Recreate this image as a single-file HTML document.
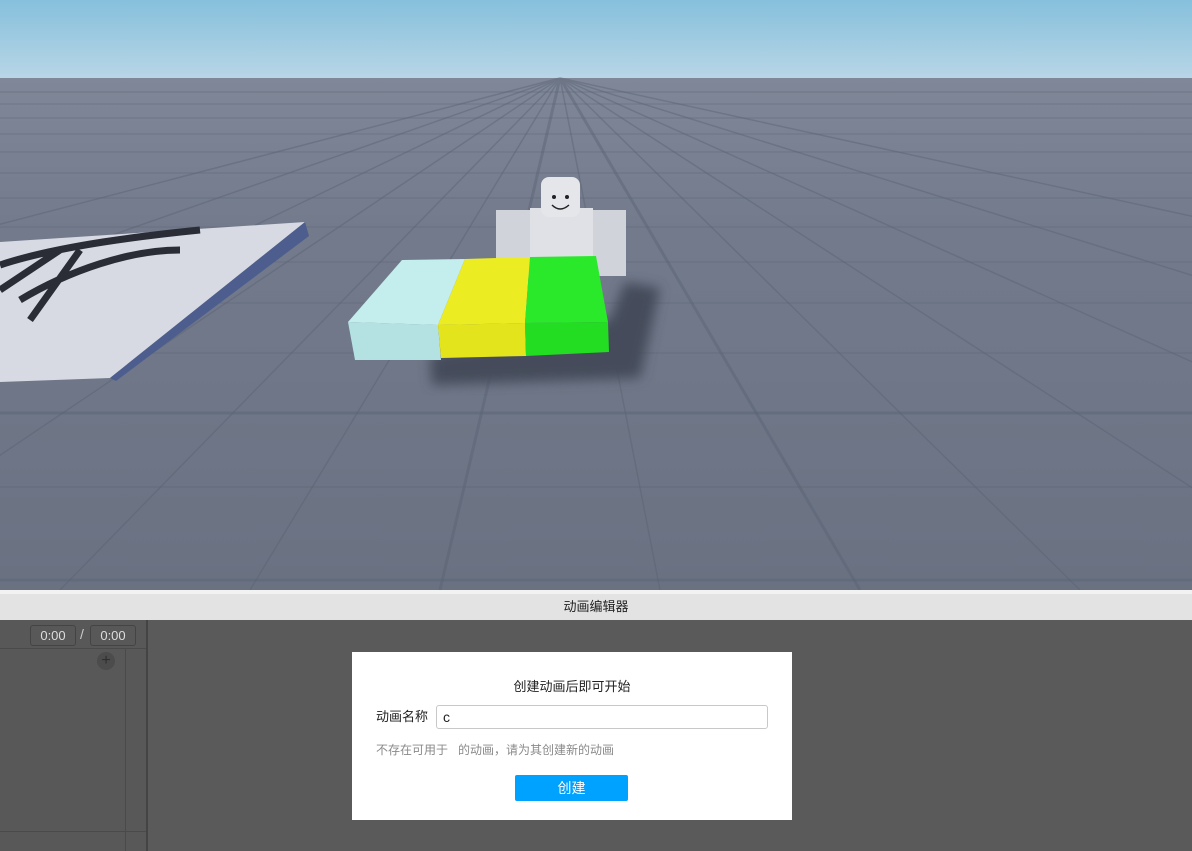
<!DOCTYPE html>
<html><head><meta charset="utf-8"><style>
body{margin:0;width:1192px;height:851px;overflow:hidden;font-family:"Liberation Sans","Noto Sans CJK SC",sans-serif;position:relative;background:#5a5a5a}
.abs{position:absolute}
</style></head><body>
<svg class="abs" style="left:0;top:0" width="1192" height="590" viewBox="0 0 1192 590">
<defs>
<linearGradient id="sky" x1="0" y1="0" x2="0" y2="1"><stop offset="0" stop-color="#86c0dc"/><stop offset="1" stop-color="#b9d6e6"/></linearGradient>
<linearGradient id="gr" x1="0" y1="0" x2="0" y2="1"><stop offset="0" stop-color="#7f8798"/><stop offset="0.3" stop-color="#727a8c"/><stop offset="1" stop-color="#6a7282"/></linearGradient>
<filter id="bl"><feGaussianBlur stdDeviation="6"/></filter>
</defs>
<rect width="1192" height="80" fill="url(#sky)"/>
<rect y="78" width="1192" height="512" fill="url(#gr)"/>
<g stroke="#5a6373" stroke-width="1" opacity="0.45">
<line x1="0" y1="92" x2="1192" y2="92"/><line x1="0" y1="104" x2="1192" y2="104"/><line x1="0" y1="118" x2="1192" y2="118"/><line x1="0" y1="134" x2="1192" y2="134"/><line x1="0" y1="152" x2="1192" y2="152"/><line x1="0" y1="173" x2="1192" y2="173"/><line x1="0" y1="198" x2="1192" y2="198"/><line x1="0" y1="227" x2="1192" y2="227"/><line x1="0" y1="262" x2="1192" y2="262"/><line x1="0" y1="303" x2="1192" y2="303"/><line x1="0" y1="353" x2="1192" y2="353"/><line x1="0" y1="413" x2="1192" y2="413" stroke-width="3"/><line x1="0" y1="487" x2="1192" y2="487"/><line x1="0" y1="580" x2="1192" y2="580" stroke-width="3"/>
</g>
<g stroke="#5a6373" stroke-width="1.5" opacity="0.45">
<line x1="560" y1="78" x2="-1400" y2="590"/><line x1="560" y1="78" x2="-900" y2="590"/><line x1="560" y1="78" x2="-500" y2="590"/><line x1="560" y1="78" x2="-200" y2="590"/><line x1="560" y1="78" x2="60" y2="590"/><line x1="560" y1="78" x2="250" y2="590"/><line x1="560" y1="78" x2="440" y2="590" stroke-width="3"/><line x1="560" y1="78" x2="660" y2="590"/><line x1="560" y1="78" x2="860" y2="590" stroke-width="3"/><line x1="560" y1="78" x2="1080" y2="590"/><line x1="560" y1="78" x2="1350" y2="590"/><line x1="560" y1="78" x2="1700" y2="590"/><line x1="560" y1="78" x2="2200" y2="590"/><line x1="560" y1="78" x2="2900" y2="590"/>
</g>
<polygon points="430,355 610,320 625,282 660,288 640,378 432,385" fill="#444b5a" filter="url(#bl)"/>
<polygon points="0,242 305,222 110,378 0,382" fill="#d8dae3"/>
<polygon points="305,222 309,236 116,381 110,378" fill="#4d5e8e"/>
<path d="M0,265 C60,245 150,235 200,230 M20,300 C70,270 130,250 180,250 M0,290 L60,250 M80,250 L30,320" stroke="#2a2d36" stroke-width="7" fill="none"/>
<rect x="496" y="210" width="130" height="66" fill="#d0d3da"/>
<rect x="530" y="208" width="63" height="68" fill="#dfe1e6"/>
<rect x="541" y="177" width="39" height="40" rx="8" fill="#e4e6ea"/>
<circle cx="554" cy="197" r="2" fill="#222"/><circle cx="567" cy="197" r="2" fill="#222"/>
<path d="M552 205 Q560 213 569 205" stroke="#222" stroke-width="1.5" fill="none"/>
<polygon points="348,322 402,260 465,259 438,325" fill="#c4eded"/>
<polygon points="348,322 438,325 441,360 355,360" fill="#b4e2e3"/>
<polygon points="438,325 465,259 530,257 525,323" fill="#ecec22"/>
<polygon points="438,325 525,323 526,356 441,358" fill="#e4e41c"/>
<polygon points="525,323 530,257 596,256 608,322" fill="#2ae82a"/>
<polygon points="525,323 608,322 609,352 526,356" fill="#22dd22"/>
</svg>
<div class="abs" style="left:0;top:590px;width:1192px;height:30px;background:#e3e3e3;border-top:4px solid #f2f2f2;box-sizing:border-box;font-size:13px;color:#222;text-align:center;line-height:26px;">动画编辑器</div>
<div class="abs" style="left:0;top:620px;width:146px;height:231px;background:#585858;border-right:2px solid #444"></div>
<div class="abs" style="left:0;top:648px;width:146px;height:1px;background:#4a4a4a"></div>
<div class="abs" style="left:125px;top:649px;width:1px;height:202px;background:#4a4a4a"></div>
<div class="abs" style="left:0;top:831px;width:146px;height:1px;background:#4a4a4a"></div>
<div class="abs" style="left:30px;top:625px;width:44px;height:19px;border:1px solid #444;border-radius:3px;color:#ddd;font-size:13px;text-align:center;line-height:19px">0:00</div>
<div class="abs" style="left:80px;top:626px;color:#ccc;font-size:14px">/</div>
<div class="abs" style="left:90px;top:625px;width:44px;height:19px;border:1px solid #444;border-radius:3px;color:#ddd;font-size:13px;text-align:center;line-height:19px">0:00</div>
<div class="abs" style="left:97px;top:652px;width:18px;height:18px;border-radius:50%;background:#4c4c4c;color:#2e2e2e;font-size:16px;text-align:center;line-height:18px">+</div>
<div class="abs" style="left:352px;top:652px;width:440px;height:168px;background:#fff;font-size:13px">
<div class="abs" style="left:0;top:24px;width:440px;text-align:center;color:#222">创建动画后即可开始</div>
<div class="abs" style="left:24px;top:57px;color:#222;line-height:16px">动画名称</div>
<div class="abs" style="left:84px;top:53px;width:332px;height:24px;border:1px solid #c8c8c8;border-radius:3px;line-height:22px;padding-left:6px;box-sizing:border-box;color:#222;font-size:14px">c</div>
<div class="abs" style="left:24px;top:89px;color:#8a8a8a;font-size:12px">不存在可用于&nbsp;&nbsp;&nbsp;的动画，请为其创建新的动画</div>
<div class="abs" style="left:163px;top:123px;width:113px;height:26px;background:#00a2ff;border-radius:2px;color:#fff;font-size:14px;text-align:center;line-height:26px">创建</div>
</div>
</body></html>
